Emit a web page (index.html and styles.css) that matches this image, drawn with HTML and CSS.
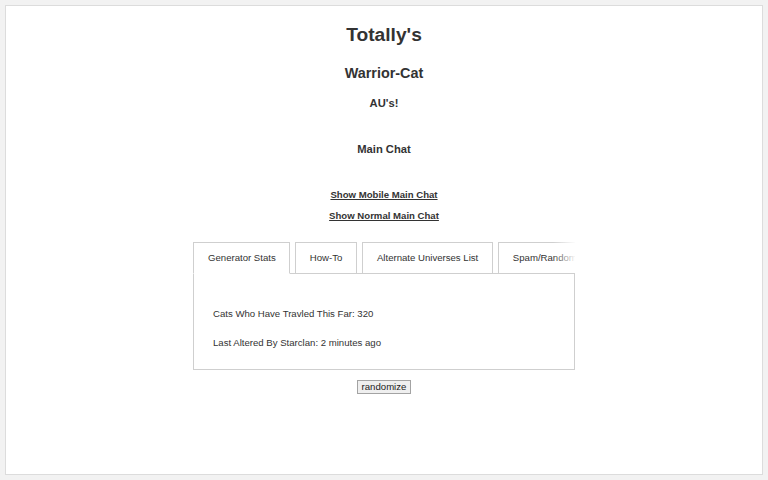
FILE: index.html
```html
<!DOCTYPE html>
<html lang="en">
<head>
<meta charset="utf-8">
<title>Totally's Warrior-Cat AU's!</title>
<link rel="stylesheet" href="styles.css">
</head>
<body>
<div class="page">
  <h1 class="title">Totally's</h1>
  <h2 class="subtitle">Warrior-Cat</h2>
  <h3 class="au">AU's!</h3>
  <h3 class="section">Main Chat</h3>
  <div class="links">
    <a class="link" href="#">Show Mobile Main Chat</a>
    <a class="link link-second" href="#">Show Normal Main Chat</a>
  </div>
  <div class="tabs">
    <div class="tabstrip">
      <div class="tab tab-active">Generator Stats</div>
      <div class="tab">How-To</div>
      <div class="tab">Alternate Universes List</div>
      <div class="tab">Spam/Random</div>
    </div>
    <div class="panel">
      <p class="stat">Cats Who Have Travled This Far: 320</p>
      <p class="stat stat-second">Last Altered By Starclan: 2 minutes ago</p>
    </div>
  </div>
  <div class="actions">
    <button class="btn" type="button">randomize</button>
  </div>
</div>
</body>
</html>
```
FILE: styles.css
```css
html, body {
  height: 100%;
}
body {
  margin: 0;
  padding: 4.8px;
  box-sizing: border-box;
  background: #f2f2f2;
  font-family: "Liberation Sans", Arial, sans-serif;
  color: #333;
}
.page {
  box-sizing: border-box;
  height: 100%;
  background: #fff;
  border: 1px solid #dcdcdc;
  padding-top: 18px;
  text-align: center;
}
.title {
  margin: 0;
  font-size: 19.2px;
  line-height: 22px;
  font-weight: bold;
}
.subtitle {
  margin: 19px 0 0;
  font-size: 14.4px;
  line-height: 17px;
  font-weight: bold;
}
.au {
  margin: 15px 0 0;
  font-size: 11.2px;
  line-height: 13px;
  font-weight: bold;
}
.section {
  margin: 33.5px 0 0;
  font-size: 11.2px;
  line-height: 13px;
  font-weight: bold;
}
.links {
  margin-top: 32.6px;
}
.link {
  display: block;
  width: max-content;
  margin: 0 auto;
  font-size: 9.6px;
  line-height: 11px;
  font-weight: bold;
  color: #333;
  text-decoration: underline;
}
.link-second {
  margin-top: 10px;
}
.tabs {
  width: 382px;
  margin: 21.3px auto 0;
  text-align: left;
}
.tabstrip {
  position: relative;
  display: flex;
  gap: 4.6px;
  overflow: hidden;
  background: linear-gradient(#cfcfcf, #cfcfcf) left bottom / 100% 1px no-repeat;
}
.tabstrip::after {
  content: "";
  position: absolute;
  top: 0;
  right: 0;
  bottom: 1px;
  width: 22px;
  background: linear-gradient(to right, rgba(255,255,255,0), rgba(255,255,255,0.95));
}
.tab {
  flex-shrink: 0;
  padding: 9px 14px 10px;
  font-size: 9.6px;
  line-height: 11px;
  white-space: nowrap;
  color: #333;
  border: 1px solid #cfcfcf;
  border-bottom: 1px solid transparent;
  background: transparent;
}
.tab-active {
  background: #fff;
  border-bottom-color: #fff;
  padding-right: 13.5px;
}
.panel {
  border: 1px solid #cfcfcf;
  border-top: 0;
  padding: 34px 19px 21px;
}
.stat {
  margin: 0;
  font-size: 9.6px;
  line-height: 11px;
  color: #333;
}
.stat-second {
  margin-top: 18px;
}
.actions {
  display: flex;
  justify-content: center;
  margin-top: 10px;
}
.btn {
  font-family: "Liberation Sans", Arial, sans-serif;
  font-size: 9.6px;
  line-height: 10px;
  padding: 1px 4px;
  color: #222;
  background: #efefef;
  border: 1px solid #a3a3a3;
  border-radius: 0;
}
```
